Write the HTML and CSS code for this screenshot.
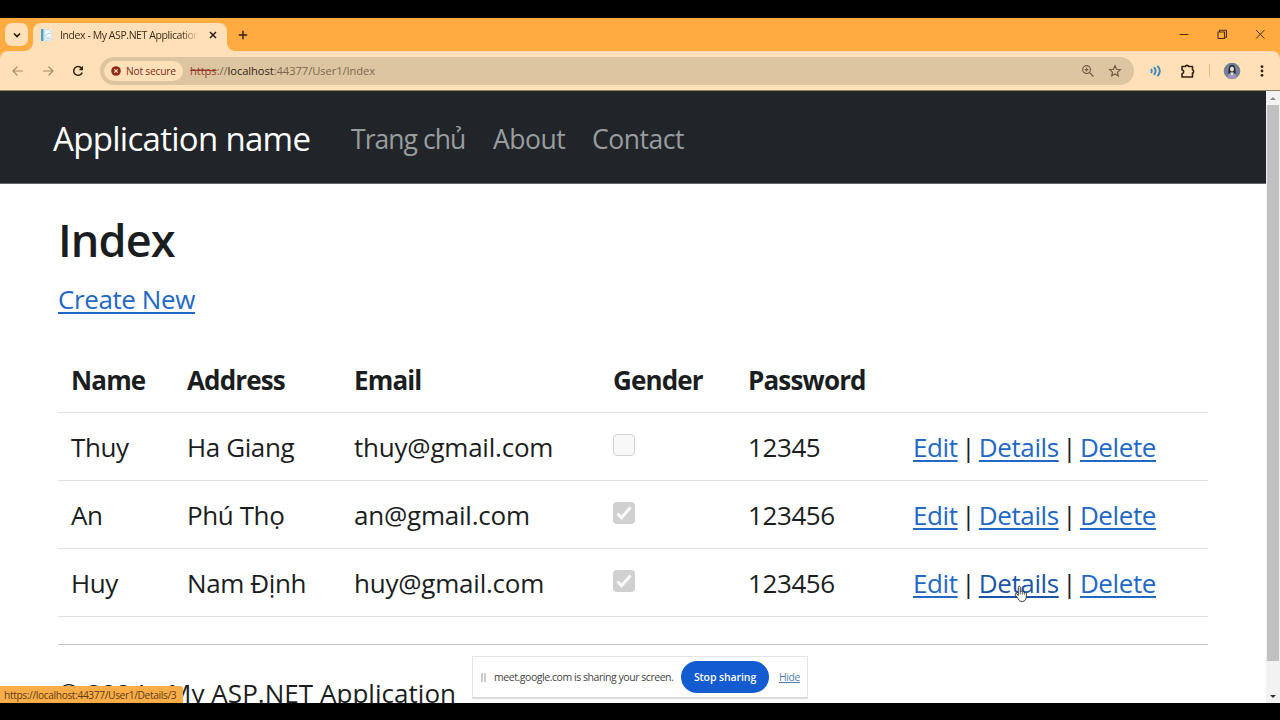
FILE: index.html
```html
<!DOCTYPE html>
<html lang="vi">
<head>
<meta charset="utf-8">
<title>Index - My ASP.NET Application</title>
<link rel="stylesheet" href="styles.css">
</head>
<body>
<div class="screen">
  <div class="tabstrip">
    <div class="tab-search"><svg width="10" height="10" viewBox="0 0 10 10"><path d="M2 3.5 5 6.5 8 3.5" fill="none" stroke="#241a0c" stroke-width="1.7"/></svg></div>
    <div class="tab">
      <svg class="favicon" width="14" height="14" viewBox="0 0 14 14"><path d="M1 1h11v12H1z" fill="#e4eef2"/><path d="M1 1h2.5v12H1z" fill="#4e9fc8"/><path d="M5 2h4l3 3v7H5z" fill="#f8fbfc" stroke="#b8d5e5" stroke-width=".7"/><path d="M6 8c1-3 3-3 5-2M6 10h5" fill="none" stroke="#9ccbe2"/></svg>
      <span class="tab-title">Index - My ASP.NET Application</span>
      <svg class="tab-close" width="10" height="10" viewBox="0 0 10 10"><path d="M2 2 8 8M8 2 2 8" stroke="#2b1c0b" stroke-width="1.5"/></svg>
    </div>
    <svg class="new-tab" width="12" height="12" viewBox="0 0 12 12"><path d="M6 1.8v8.4M1.8 6h8.4" stroke="#3a210a" stroke-width="1.5"/></svg>
    <div class="win-controls">
      <svg width="12" height="12" viewBox="0 0 12 12"><path d="M1.5 6.5h9" stroke="#4d300d"/></svg>
      <svg width="12" height="12" viewBox="0 0 12 12"><path d="M2 4h6.5v6.5H2zM3.5 4V2.2h7v7H8.5" fill="none" stroke="#4d300d" stroke-width="1.1"/></svg>
      <svg width="12" height="12" viewBox="0 0 12 12"><path d="m2 2 8.5 8.5M10.5 2 2 10.5" stroke="#4d300d"/></svg>
    </div>
  </div>

  <div class="toolbar">
    <svg class="nav-ic" width="14" height="14" viewBox="0 0 14 14"><path d="M12 7H2.5M6.500 2.500 2 7l4.500 4.500" fill="none" stroke="#a68b6b" stroke-width="1.2"/></svg>
    <svg class="nav-ic" width="14" height="14" viewBox="0 0 14 14"><path d="M2 7h9.500M7.500 2.500 12 7l-4.500 4.500" fill="none" stroke="#a68b6b" stroke-width="1.2"/></svg>
    <svg class="nav-ic" width="14" height="14" viewBox="0 0 14 14"><path d="M11.200 8.500A4.400 4.400 0 1 1 10.600 4.300L11.600 5.500" fill="none" stroke="#33220f" stroke-width="1.5"/><path d="M12 1.800v4.400H7.600z" fill="#33220f"/></svg>
    <div class="omnibox">
      <div class="chip">
        <svg width="10" height="10" viewBox="0 0 10 10"><circle cx="5" cy="5" r="4.8" fill="#8f2a18"/><path d="m3.300 3.300 3.400 3.400M6.700 3.300 3.300 6.700" stroke="#ffe2bf" stroke-width="1.2"/></svg>
        <span>Not secure</span>
      </div>
      <div class="url"><s>https</s>://<b>localhost</b>:44377/User1/Index</div>
      <svg class="magnify" width="14" height="14" viewBox="0 0 14 14"><circle cx="5.600" cy="5.600" r="3.900" fill="none" stroke="#705c42" stroke-width="1.2"/><path d="m8.500 8.500 4 4M5.600 3.800v3.600M3.800 5.600h3.600" stroke="#705c42" stroke-width="1.2"/></svg>
      <svg class="star" width="14" height="14" viewBox="0 0 14 14"><path d="m7 1.800 1.550 3.450 3.750.4-2.800 2.500.8 3.700L7 9.950l-3.300 1.900.8-3.700-2.800-2.500 3.750-.4z" fill="none" stroke="#705c42" stroke-width="1.2"/></svg>
    </div>
    <svg class="waves" width="14" height="14" viewBox="0 0 14 14"><path d="M2 5q1.600 2 0 4M5 3.200q3.200 3.800 0 7.600M8.500 1.800q4.600 5.200 0 10.400" fill="none" stroke="#3d86bd" stroke-width="1.9"/></svg>
    <svg class="puzzle" width="16" height="16" viewBox="0 0 16 16"><path d="M2 3.500h3.200c.3-1.500 3.300-1.500 3.600 0h3.700v3.300c1.500.3 1.500 3 0 3.300v3.900H2v-3.300c2.300-.3 2.300-3.500 0-3.800z" fill="none" stroke="#33220f" stroke-width="1.6" stroke-linejoin="round"/></svg>
    <i class="divider"></i>
    <svg class="avatar" width="18" height="18" viewBox="0 0 18 18"><circle cx="9" cy="9" r="8.300" fill="#718096"/><path d="M4.500 16c0-4 2-5 4.500-5s4.500 1 4.500 5q-4.500 2-9 0" fill="#9b92b4"/><path d="M5.200 11.500c.8-8 1.400-8.500 3.800-8.500s3 .5 3.800 8.500z" fill="#292633"/><ellipse cx="9" cy="7" rx="2" ry="2.600" fill="#f0dcd6"/><path d="m7 10.500 2 3.500 2-3.500z" fill="#eee"/></svg>
    <svg class="kebab" width="6" height="14" viewBox="0 0 6 14" fill="#33220f"><circle cx="3" cy="2.700" r="1.400"/><circle cx="3" cy="7" r="1.400"/><circle cx="3" cy="11.300" r="1.400"/></svg>
  </div>

  <div class="viewport">
    <div class="page">
      <nav class="navbar">
        <a class="brand">Application name</a>
        <a class="nav-link home">Trang chủ</a>
        <a class="nav-link about">About</a>
        <a class="nav-link contact">Contact</a>
      </nav>
      <main class="content">
        <h2>Index</h2>
        <p class="create"><a class="link">Create New</a></p>
        <table class="table">
          <colgroup><col class="c-name"><col class="c-address"><col class="c-email"><col class="c-gender"><col class="c-password"><col></colgroup>
          <tr><th>Name</th><th>Address</th><th>Email</th><th>Gender</th><th>Password</th><th></th></tr>
          <tr><td>Thuy</td><td>Ha Giang</td><td class="email">thuy@gmail.com</td><td><span class="check"></span></td><td>12345</td><td class="actions"><a class="link">Edit</a> | <a class="link">Details</a> | <a class="link">Delete</a></td></tr>
          <tr><td>An</td><td>Phú Thọ</td><td class="email">an@gmail.com</td><td><span class="check checked"><svg width="22" height="22" viewBox="0 0 22 22"><path d="m4.500 11.500 4 4.200 9-10.200" fill="none" stroke="#fafafa" stroke-width="3"/></svg></span></td><td>123456</td><td class="actions"><a class="link">Edit</a> | <a class="link">Details</a> | <a class="link">Delete</a></td></tr>
          <tr><td>Huy</td><td>Nam Định</td><td class="email">huy@gmail.com</td><td><span class="check checked"><svg width="22" height="22" viewBox="0 0 22 22"><path d="m4.500 11.500 4 4.200 9-10.200" fill="none" stroke="#fafafa" stroke-width="3"/></svg></span></td><td>123456</td><td class="actions"><a class="link">Edit</a> | <a class="link hover">Details</a> | <a class="link">Delete</a></td></tr>
        </table>
        <hr>
        <footer>© 2024 - My ASP.NET Application</footer>
      </main>
    </div>
    <div class="scrollbar">
      <svg width="14" height="14" viewBox="0 0 14 14"><path d="M4 9h6L7 6z" fill="#8a8a8a"/></svg>
      <div class="thumb"></div>
      <svg class="down" width="14" height="14" viewBox="0 0 14 14"><path d="M4 6h6L7 9z" fill="#333"/></svg>
    </div>
  </div>

  <svg class="cursor" width="14" height="18" viewBox="0 0 14 18"><path d="M4.300 10.500V2.400c0-1.600 2-1.600 2 0v4.200c.5-.8 1.900-.6 2 .5.700-.8 1.800-.4 2 .6.900-.6 2 0 2 1.200v3c0 2.500-1.400 4.600-4 4.600-2.300 0-3.300-1-4.300-2.800L1.300 10c-.7-1.300.7-2.100 1.600-1.100z" fill="#fff" stroke="#222" stroke-width=".9"/><path d="M6.300 6.500v3M8.300 7.300v2.300M10.300 8v1.800" stroke="#222" stroke-width=".7"/></svg>
  <div class="status">https://localhost:44377/User1/Details/3</div>
  <div class="share">
    <i class="grip"></i>
    <span class="share-text">meet.google.com is sharing your screen.</span>
    <span class="stop">Stop sharing</span>
    <a class="hide">Hide</a>
  </div>
</div>
</body>
</html>
```

FILE: styles.css
```css
* { box-sizing: border-box; }
body { margin: 0; background: #000; font-family: "Open Sans", "Noto Sans", sans-serif; }
svg { display: block; flex: none; }
.screen { position: relative; width: 1280px; height: 720px; padding: 18px 0 17px; background: #000; display: flex; flex-direction: column; overflow: hidden; }

.tabstrip { position: relative; z-index: 1; height: 33px; flex: none; background: #ffab40; display: flex; align-items: flex-start; padding-left: 5px; }
.tab-search { width: 23px; height: 23px; margin-top: 5px; border-radius: 7px; background: #ffe0b8; display: flex; align-items: center; justify-content: center; }
.tab { position: relative; width: 194px; height: 28px; margin: 5px 0 0 5px; padding: 0 9px 4px 7px; border-radius: 8px 8px 0 0; background: #ffe0b8; display: flex; align-items: center; }
.tab::before, .tab::after { content: ""; position: absolute; bottom: 0; width: 8px; height: 8px; }
.tab::before { left: -8px; background: radial-gradient(circle at 0 0, transparent 7.5px, #ffe0b8 8px); }
.tab::after { right: -8px; background: radial-gradient(circle at 100% 0, transparent 7.5px, #ffe0b8 8px); }
.tab-title { width: 138px; margin-left: 6px; font-size: 10.5px; letter-spacing: -0.42px; white-space: nowrap; overflow: hidden; color: #3b2b18; -webkit-mask-image: linear-gradient(90deg, #000 88%, transparent); mask-image: linear-gradient(90deg, #000 88%, transparent); }
.tab-close { margin-left: auto; }
.new-tab { margin: 11px 0 0 10px; }
.win-controls { display: flex; gap: 26px; margin: 10px 14px 0 auto; }

.toolbar { position: relative; height: 40px; flex: none; background: #ffe0b8; border-bottom: 1px solid #93805f; border-radius: 8px 8px 0 0; box-shadow: 0 -8px 0 #ffab40; display: flex; align-items: center; padding: 0 15px 0 11px; }
.nav-ic { margin-right: 16px; }
.omnibox { width: 1034px; height: 28px; margin-left: -1px; padding: 0 12px 0 4px; border-radius: 14px; background: #dec5a2; display: flex; align-items: center; }
.chip { width: 79px; height: 20px; border-radius: 10px; background: #ffe0b8; display: flex; align-items: center; gap: 5px; padding-left: 7px; font-size: 10.3px; letter-spacing: -0.25px; font-weight: 500; color: #7b2f1d; white-space: nowrap; }
.url { margin-left: 7px; font-size: 11.2px; color: #7c684c; letter-spacing: -0.08px; white-space: nowrap; }
.url s { color: #94402a; }
.url b { font-weight: 400; color: #33261a; }
.magnify { margin-left: auto; }
.star { margin-left: 13px; }
.waves { margin-left: 15px; }
.puzzle { margin-left: 17px; }
.divider { width: 1px; height: 13px; margin-left: 13px; background: #e9bd80; }
.avatar { margin-left: 13px; }
.kebab { margin-left: auto; }

.viewport { flex: 1; min-height: 0; display: flex; background: #fff; overflow: hidden; }
.page { width: 1266px; }
.navbar { height: 93px; background: #212529; border-bottom: 1px solid #62666a; display: flex; align-items: center; padding: 3px 0 0 53px; white-space: nowrap; }
.brand { width: 298px; font-size: 33px; letter-spacing: -0.7px; color: #fff; }
.nav-link { font-size: 26.5px; color: #999c9e; letter-spacing: -0.45px; }
.home { width: 142px; letter-spacing: -0.95px; }
.about { width: 99px; }
.content { padding: 0 58px; color: #1b1e21; font-size: 26px; letter-spacing: -0.4px; }
h2 { margin: 0; padding-top: 28px; font-size: 45px; line-height: 56px; font-weight: 600; letter-spacing: -0.9px; }
.create { margin: 11px 0 0; line-height: 40px; }
.link { color: #2268c6; text-decoration: underline; text-decoration-thickness: 2px; text-underline-offset: 3px; text-decoration-skip-ink: none; }
.link.hover { color: #1a56a5; }
.table { width: 1150px; margin-top: 25px; table-layout: fixed; border-collapse: collapse; white-space: nowrap; }
.table tr { height: 68px; }
.table th, .table td { padding: 2px 13px 0; border-bottom: 1px solid #dee2e6; text-align: left; line-height: 40px; }
.table th { padding-top: 4px; font-weight: 700; letter-spacing: -0.85px; }
.table .email { letter-spacing: -0.22px; }
.table .actions { word-spacing: -2.700px; }
.c-name { width: 116px; }
.c-address { width: 167px; }
.c-email { width: 259px; }
.c-gender { width: 135px; }
.c-password { width: 165px; }
.check { display: block; width: 22px; height: 22px; margin: -4px 0 0 -0.5px; border: 1.5px solid #d2d2d2; border-radius: 4px; background: #f8f8f8; }
.check.checked { border: 0; background: #d0d0d0; }
hr { margin: 27px 0 0; border: 0; border-top: 1px solid #c4c5c6; }
footer { margin-top: 28px; line-height: 40px; letter-spacing: 0.04px; white-space: nowrap; }

.scrollbar { width: 14px; background: #f2f2f2; display: flex; flex-direction: column; }
.thumb { width: 12px; height: 556px; margin-left: 1px; background: #c1c1c1; }
.down { margin-top: auto; }

.cursor { position: absolute; left: 1014px; top: 585px; }
.status { position: absolute; left: 0; top: 686px; width: 183px; height: 17px; padding-left: 4px; background: #fcad48; border-radius: 0 3px 0 0; font-size: 10.2px; letter-spacing: -0.37px; line-height: 18px; color: #5b3d18; white-space: nowrap; }
.share { position: absolute; left: 472px; top: 656px; width: 336px; height: 43px; border: 1px solid #e4e4e4; border-bottom: 2px solid #dadada; background: #fff; display: flex; align-items: center; padding-left: 8px; font-size: 10.5px; white-space: nowrap; }
.grip { width: 5px; height: 9px; border: solid #ccc; border-width: 0 2px; }
.share-text { width: 187px; margin-left: 8px; letter-spacing: -0.45px; color: #444; }
.stop { width: 88px; height: 32px; border-radius: 16px; background: #135bd0; color: #fff; font-weight: 600; letter-spacing: -0.1px; line-height: 32px; text-align: center; }
.hide { margin-left: 10px; letter-spacing: -0.4px; color: #537fac; text-decoration: underline; }
```
